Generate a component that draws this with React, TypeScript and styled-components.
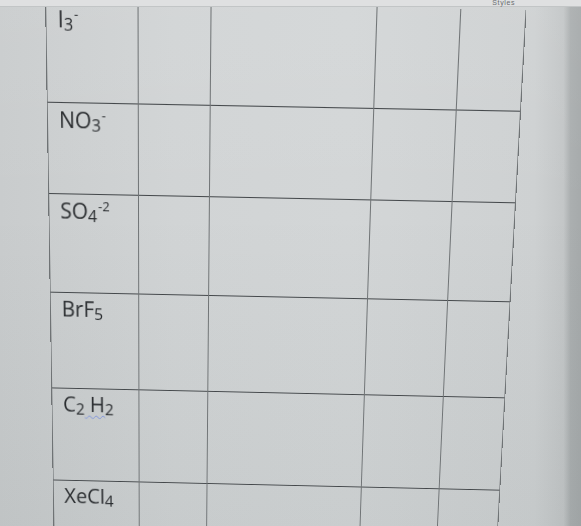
import React from "react";
import styled, { createGlobalStyle } from "styled-components";

const Global = createGlobalStyle`
  html, body { margin: 0; padding: 0; }
  body {
    background: #ced1d2;
    font-family: "Open Sans", "Liberation Sans", sans-serif;
    overflow: hidden;
  }
`;

const Page = styled.div`
  width: 581px;
  height: 526px;
  overflow: hidden;
  display: flex;
  flex-direction: column;
  background:
    linear-gradient(180deg, rgba(255, 255, 255, 0.06) 0%, rgba(255, 255, 255, 0) 40%, rgba(20, 40, 40, 0.05) 100%),
    linear-gradient(90deg, #c9cccd 0%, #d1d4d5 30%, #d3d6d7 60%, #ced1d2 92%, #c3c6c7 97%, #abafb0 98.2%, #a6aaab 100%);
`;

const Ribbon = styled.div`
  position: relative;
  z-index: 1;
  height: 6px;
  flex: none;
  background: #dfe0e1;
  border-bottom: 1px solid #c2c5c6;
  display: flex;
  justify-content: flex-end;
  padding-right: 66px;
`;

const RibbonLabel = styled.span`
  font-size: 7px;
  line-height: 6px;
  letter-spacing: 0.6px;
  color: #6a6d70;
  font-family: "Liberation Sans", sans-serif;
`;

const Body = styled.div`
  padding-left: 47px;
  flex: 1;
`;

const Grid = styled.table`
  border-collapse: collapse;
  table-layout: fixed;
  width: 466px;
  transform-origin: 0 0;
  transform: matrix3d(
    1.025903, 0.018524, 0, -0.000010387,
    0.016713, 1.070128, 0, 0.00015702,
    0, 0, 1, 0,
    -1.89211, -5.54967, 0, 1
  );
`;

const Row = styled.tr<{ $last?: boolean }>`
  border-bottom: ${(p) => (p.$last ? "none" : "1px solid #43474a")};
`;

const Cell = styled.td<{ $w: number; $h: number }>`
  box-sizing: border-box;
  width: ${(p) => p.$w}px;
  height: ${(p) => p.$h}px;
  border-left: 1px solid #6f7375;
  border-right: 1px solid #6f7375;
  vertical-align: top;
  padding: 4px 0 0 11px;
  color: #2a2d30;
  font-size: 21px;
  line-height: 24px;
  white-space: nowrap;
`;

const Sub = styled.sub`
  font-size: 16px;
  vertical-align: -3px;
  line-height: 0;
`;

const Sup = styled.sup`
  font-size: 13px;
  vertical-align: 8px;
  line-height: 0;
  margin-left: 1px;
`;

const Squiggle = styled.span`
  text-decoration: underline wavy #7d92dc;
  text-decoration-thickness: 1px;
  text-underline-offset: 3px;
`;

const widths = [90, 71, 161, 81, 63];

const formulas: { h: number; content: React.ReactNode }[] = [
  { h: 95, content: <>I<Sub>3</Sub><Sup>-</Sup></> },
  { h: 89, content: <>NO<Sub>3</Sub><Sup>-</Sup></> },
  { h: 99, content: <>SO<Sub>4</Sub><Sup>-2</Sup></> },
  { h: 99, content: <>BrF<Sub>5</Sub></> },
  { h: 98, content: <>C<Sub>2</Sub><Squiggle> H</Squiggle><Sub>2</Sub></> },
  { h: 120, content: <>XeCl<Sub>4</Sub></> },
];

export default function App() {
  return (
    <>
      <Global />
      <Page>
        <Ribbon>
          <RibbonLabel>Styles</RibbonLabel>
        </Ribbon>
        <Body>
          <Grid>
            <tbody>
              {formulas.map((f, i) => (
                <Row key={i} $last={i === formulas.length - 1}>
                  {widths.map((w, j) => (
                    <Cell key={j} $w={w} $h={f.h}>
                      {j === 0 ? f.content : null}
                    </Cell>
                  ))}
                </Row>
              ))}
            </tbody>
          </Grid>
        </Body>
      </Page>
    </>
  );
}
